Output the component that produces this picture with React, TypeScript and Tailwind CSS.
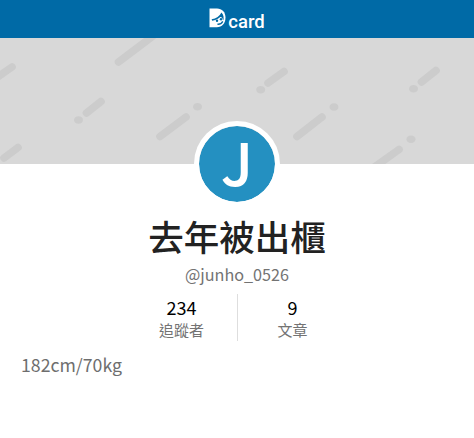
const sticks = [
  [-3, 77.5, 12, 67],
  [118.5, 62, 153, 36],
  [86.5, 113, 101, 101.5],
  [4, 158, 18, 147.5],
  [160, 136.5, 186, 117],
  [268, 83, 284, 71.5],
  [297, 136.5, 322, 117],
  [421.5, 82, 436, 70.5],
  [371, 169.5, 399, 149.5],
];

const dots = [
  [78.5, 120],
  [197.5, 106.7],
  [260.7, 89.7],
  [334, 107],
  [413.5, 88.7],
  [411, 139.3],
];

function Logo() {
  return (
    <svg className="h-5 w-[17px] shrink-0" viewBox="0 0 17 20" fill="none">
      <path d="M0.5 0.4H8C13 0.4 16.5 4 16.5 9.6C16.5 15.6 13 19.2 7.8 19.2H0.5Z" fill="#fff" />
      <path
        d="M2.6 11.2C7.4 10.4 10.6 8.2 12.4 4.4C14.6 6.8 15.1 9.6 14.3 12.4C13.4 10 12.4 8.8 11 9.2C8.8 11 6.2 12.4 3.2 12.7Z"
        fill="#006aa6"
      />
      <circle cx="8" cy="12.8" r="1.2" fill="#006aa6" />
      <circle cx="12" cy="11.2" r="1.2" fill="#006aa6" />
      <path d="M8.4 16.2C10.6 16.5 12.6 15.5 13.8 13.4" stroke="#006aa6" strokeWidth="1.3" />
    </svg>
  );
}

function Stat({ value, label }: { value: string; label: string }) {
  return (
    <div className="flex w-[110px] flex-col items-center">
      <span className="mt-px text-[18px] leading-6 text-black">{value}</span>
      <span className="text-[15px] leading-[22px] text-[#737373]">{label}</span>
    </div>
  );
}

export default function App() {
  return (
    <div className="flex h-[438px] w-[474px] flex-col overflow-hidden bg-white font-['Noto_Sans_CJK_TC',sans-serif]">
      <header className="flex h-[38px] shrink-0 items-center justify-center bg-[#006aa6] pb-0.5 text-white">
        <Logo />
        <span className="mt-[7px] ml-0.5 font-['Roboto',sans-serif] text-[18.5px] leading-6 font-medium">card</span>
      </header>

      <div className="h-[126px] shrink-0 bg-[#d8d8d8]">
        <svg className="h-full w-full" viewBox="0 38 474 126" stroke="#cccccc" fill="#cccccc">
          {sticks.map(([x1, y1, x2, y2], i) => (
            <line key={i} x1={x1} y1={y1} x2={x2} y2={y2} strokeWidth="7.6" strokeLinecap="round" />
          ))}
          {dots.map(([cx, cy], i) => (
            <ellipse key={i} cx={cx} cy={cy} rx="4.5" ry="3.8" stroke="none" />
          ))}
        </svg>
      </div>

      <main className="relative flex flex-col items-center">
        <div className="-mt-[43px] flex size-[86px] items-center justify-center rounded-full border-5 border-white bg-[#2490c1] bg-clip-padding pb-2 text-[59px] leading-none font-medium text-white">
          J
        </div>
        <h1 className="mt-[5px] text-[35.5px] leading-[48px] font-medium text-[#222]">去年被出櫃</h1>
        <p className="mt-0.5 text-[16.2px] leading-6 text-[#737373]">@junho_0526</p>
        <div className="mt-2 flex h-[47px]">
          <Stat value="234" label="追蹤者" />
          <div className="w-px bg-[#dedede]" />
          <Stat value="9" label="文章" />
        </div>
        <p className="mt-[11px] w-full pl-[21px] text-[17.7px] leading-6 text-[#6e6e6e]">182cm/70kg</p>
      </main>
    </div>
  );
}
